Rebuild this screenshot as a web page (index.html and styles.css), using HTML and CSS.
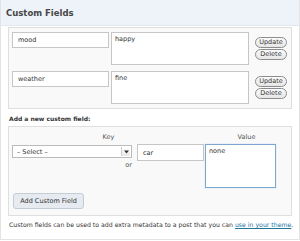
FILE: index.html
```html
<!DOCTYPE html>
<html>
<head>
<meta charset="utf-8">
<link rel="stylesheet" href="styles.css">
</head>
<body>
<div class="panel">
  <div class="panel-head">Custom Fields</div>
  <div class="panel-body">
    <div class="list">
      <div class="row">
        <div class="key">mood</div>
        <div class="val">happy</div>
        <div class="btns">
          <span class="pill">Update</span>
          <span class="pill">Delete</span>
        </div>
      </div>
      <div class="row">
        <div class="key">weather</div>
        <div class="val">fine</div>
        <div class="btns">
          <span class="pill">Update</span>
          <span class="pill">Delete</span>
        </div>
      </div>
    </div>
    <div class="add-title">Add a new custom field:</div>
    <div class="addbox">
      <div class="cols">
        <div class="keycol">
          <div class="colhead">Key</div>
          <div class="keyrow">
            <div class="selwrap">
              <div class="select">– Select –<span class="arrow"><svg width="5" height="4" viewBox="0 0 5 4"><path d="M0 0.5h5L2.5 3.5z" fill="#333"/></svg></span></div>
              <div class="or">or</div>
            </div>
            <div class="newkey">car</div>
          </div>
        </div>
        <div class="valcol">
          <div class="colhead">Value</div>
          <div class="newval">none</div>
        </div>
      </div>
      <div class="addbtn">Add Custom Field</div>
    </div>
    <p class="note">Custom fields can be used to add extra metadata to a post that you can <a href="#">use in your theme</a>.</p>
  </div>
</div>
</body>
</html>
```
FILE: styles.css
```css
html, body {
  margin: 0;
  padding: 0;
  background: #fff;
}
body {
  font-family: "DejaVu Sans", "Lucida Grande", sans-serif;
  color: #333;
  width: 300px;
  height: 241px;
  overflow: hidden;
}
.panel {
  border: 1px solid #e3e3e3;
  border-top: none;
  height: 240px;
  box-sizing: border-box;
  background: #fff;
}
.panel-head {
  height: 25px;
  line-height: 27px;
  background: #eef3f9;
  border-bottom: 1px solid #e4e8ee;
  padding-left: 5px;
  font-size: 8.5px;
  font-weight: bold;
  color: #464646;
}
.panel-body {
  padding: 1px 7px 0 7px;
}
.list {
  border: 1px solid #dfdfdf;
  background: #f9f9f9;
  padding: 4px 3px 4px 3px;
  display: flex;
  flex-direction: column;
  gap: 6px;
}
.row {
  display: flex;
  align-items: flex-start;
}
.key, .val, .newkey, .newval, .select {
  background: #fff;
  border: 1px solid #c6c6c6;
  box-sizing: border-box;
  font-size: 6.5px;
  color: #333;
  padding: 4px 5px;
}
.key {
  width: 97px;
  height: 16px;
  padding-top: 3px;
}
.val {
  width: 138px;
  height: 33px;
  margin-left: 2px;
  padding-top: 2px;
  padding-left: 3px;
}
.btns {
  display: flex;
  flex-direction: column;
  gap: 1px;
  margin-left: 6px;
  margin-top: 5px;
}
.pill {
  display: block;
  width: 32px;
  height: 11px;
  box-sizing: border-box;
  border: 1px solid #8c8c8c;
  border-radius: 6px;
  background: linear-gradient(#fbfbfb, #e6e6e6);
  font-size: 6.5px;
  line-height: 9px;
  text-align: center;
  color: #333;
}
.add-title {
  font-size: 6px;
  font-weight: bold;
  color: #333;
  margin: 6px 1px 4px;
}
.addbox {
  border: 1px solid #dfdfdf;
  background: #f9f9f9;
  height: 90px;
  box-sizing: border-box;
  padding: 0 3px;
}
.cols {
  display: flex;
}
.keycol {
  width: 193px;
}
.valcol {
  flex: 1;
}
.colhead {
  font-size: 6.5px;
  color: #555;
  text-align: center;
  height: 18px;
  line-height: 20px;
}
.keyrow {
  display: flex;
  align-items: flex-start;
}
.selwrap {
  width: 120px;
}
.select {
  position: relative;
  width: 120px;
  height: 13px;
  padding: 2px 4px;
  border-color: #bbb;
}
.arrow {
  position: absolute;
  right: 1px;
  top: 1px;
  width: 8px;
  height: 9px;
  border-left: 1px solid #ccc;
  background: linear-gradient(#fff, #e8e8e8);
  display: flex;
  align-items: center;
  justify-content: center;
}
.or {
  font-size: 6.5px;
  color: #555;
  text-align: right;
  margin-top: 3px;
}
.newkey {
  width: 67px;
  height: 17px;
  margin-left: 5px;
  margin-top: -1px;
}
.newval {
  width: 71px;
  height: 44px;
  margin-top: -1px;
  border: 1px solid #7ea7cf;
  box-shadow: 0 0 1px #a8c8e8;
  padding: 2px 3px;
}
.addbtn {
  display: inline-block;
  margin-top: 2px;
  margin-left: 1px;
  width: 71px;
  height: 16px;
  box-sizing: border-box;
  border: 1px solid #c6ccd4;
  border-radius: 3px;
  background: #e6ebf1;
  font-size: 6.5px;
  line-height: 14px;
  text-align: center;
  color: #333;
}
.note {
  font-size: 6.2px;
  color: #333;
  margin: 5px 0 0 1px;
  white-space: nowrap;
}
.note a {
  color: #21759b;
}
```
